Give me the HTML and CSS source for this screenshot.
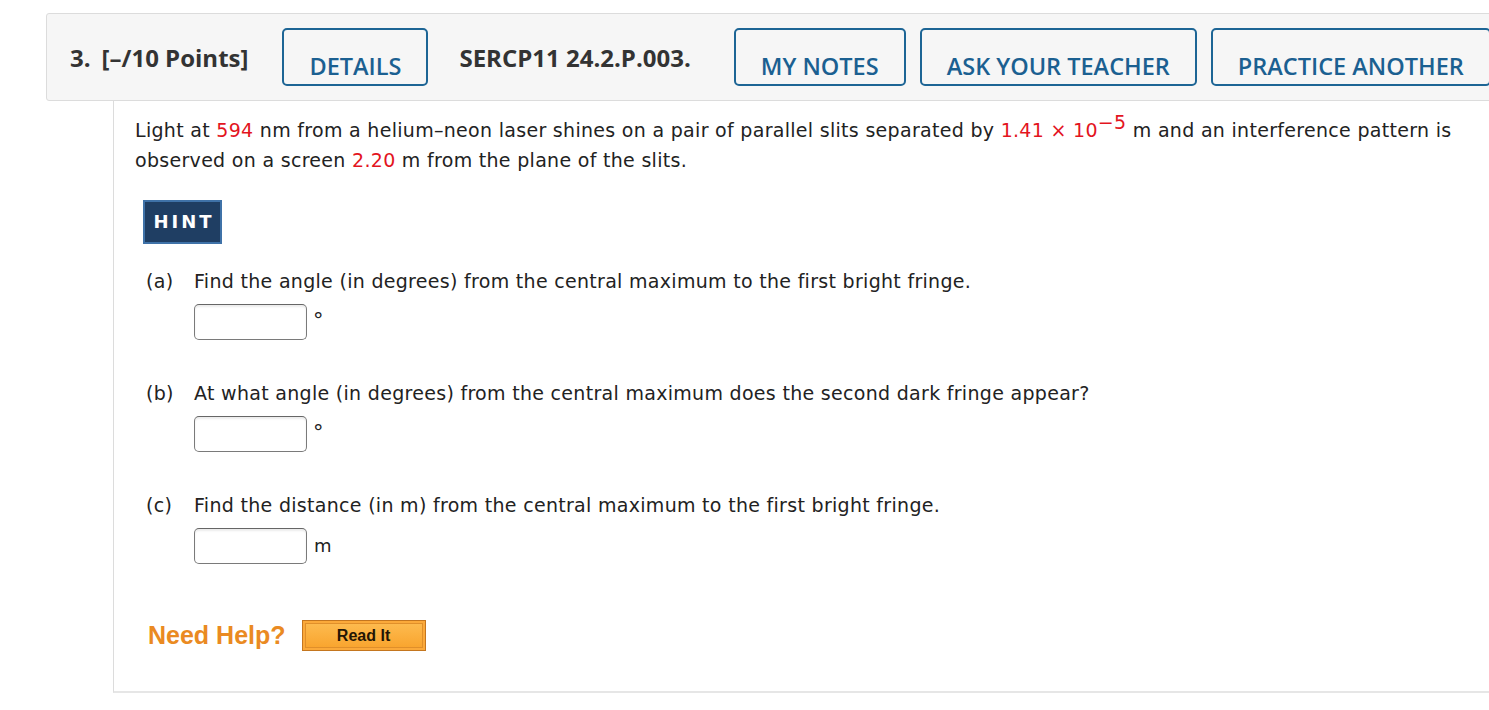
FILE: index.html
```html
<!DOCTYPE html>
<html lang="en">
<head>
<meta charset="utf-8">
<title>SERCP11 24.2.P.003</title>
<link rel="stylesheet" href="styles.css">
</head>
<body>
<div class="question">
  <div class="header">
    <span class="qnum">3.</span>
    <span class="points">[–/10 Points]</span>
    <button class="hbtn btn-details">DETAILS</button>
    <span class="code">SERCP11 24.2.P.003.</span>
    <button class="hbtn btn-notes">MY NOTES</button>
    <button class="hbtn btn-ask">ASK YOUR TEACHER</button>
    <button class="hbtn btn-practice">PRACTICE ANOTHER</button>
  </div>
  <div class="content">
    <p class="prompt">Light at <span class="red">594</span> nm from a helium–neon laser shines on a pair of parallel slits separated by <span class="red">1.41 × 10<sup>−5</sup></span> m and an interference pattern is observed on a screen <span class="red">2.20</span> m from the plane of the slits.</p>
    <div class="hint">HINT</div>

    <div class="part">
      <div class="part-q"><span class="plabel">(a)</span><span>Find the angle (in degrees) from the central maximum to the first bright fringe.</span></div>
      <div class="answer"><span class="box"></span><span class="unit deg">°</span></div>
    </div>

    <div class="part">
      <div class="part-q"><span class="plabel">(b)</span><span>At what angle (in degrees) from the central maximum does the second dark fringe appear?</span></div>
      <div class="answer"><span class="box"></span><span class="unit deg">°</span></div>
    </div>

    <div class="part">
      <div class="part-q"><span class="plabel">(c)</span><span>Find the distance (in m) from the central maximum to the first bright fringe.</span></div>
      <div class="answer"><span class="box"></span><span class="unit">m</span></div>
    </div>

    <div class="help">
      <span class="need">Need Help?</span>
      <span class="readit"><span class="readit-inner">Read It</span></span>
    </div>
  </div>
</div>
</body>
</html>
```

FILE: styles.css
```css
html, body {
  margin: 0;
  padding: 0;
  background: #ffffff;
  overflow: hidden;
}

.question {
  margin: 13px 0 0 46px;
  width: 1520px;
}

.header {
  box-sizing: border-box;
  height: 88px;
  background: #f6f6f6;
  border: 1px solid #dcdcdc;
  border-radius: 3px;
  display: flex;
  align-items: center;
  padding-left: 23px;
  font-family: "Open Sans", "Liberation Sans", sans-serif;
  font-weight: 700;
  color: #333333;
  font-size: 24px;
}

.qnum { margin-right: 11px; }
.points { margin-right: 34px; }
.code { margin: 0 43px 0 31px; }

.hbtn {
  box-sizing: border-box;
  height: 58px;
  margin-top: 0;
  padding: 18px 25px 0;
  background: transparent;
  border: 2.5px solid #1d6595;
  border-radius: 5px;
  font-family: "Open Sans", "Liberation Sans", sans-serif;
  font-weight: 600;
  font-size: 23.5px;
  color: #1b6091;
  white-space: nowrap;
  line-height: 30px;
}

.btn-notes, .btn-ask { margin-right: 14px; }

.content {
  margin-left: 67px;
  border-left: 1px solid #dcdcdc;
  border-bottom: 2px solid #e6e6e6;
  padding: 14px 0 40px 21px;
  font-family: Verdana, "DejaVu Sans", sans-serif;
  font-size: 19px;
  letter-spacing: 0.3px;
  color: #222222;
}

.prompt {
  margin: 0;
  width: 1340px;
  line-height: 30px;
}

.red { color: #e3141e; }

sup {
  font-size: 19px;
  line-height: 0;
  vertical-align: 8px;
}

.hint {
  display: inline-block;
  box-sizing: border-box;
  margin: 25px 0 0 8px;
  width: 79px;
  height: 44px;
  background: #1f3e63;
  border: 2px solid #3f72a8;
  color: #ffffff;
  font-weight: 700;
  font-size: 18px;
  letter-spacing: 3px;
  padding-left: 3px;
  line-height: 40px;
  text-align: center;
}

.part { margin-top: 22px; }
.part + .part { margin-top: 38px; }

.part-q {
  display: flex;
  line-height: 30px;
  padding-left: 11px;
}

.plabel { width: 48px; flex: none; }

.answer {
  display: flex;
  align-items: flex-start;
  margin: 8px 0 0 59px;
}

.box {
  box-sizing: border-box;
  width: 113px;
  height: 36px;
  border: 1.5px solid #7a7a7a;
  border-top-color: #666;
  border-radius: 5px;
  background: #fff;
  box-shadow: inset 0 2px 2px rgba(0,0,0,0.08);
}

.unit {
  margin-left: 7px;
  line-height: 36px;
  font-size: 18px;
}

.unit.deg {
  margin-left: 6px;
  line-height: 34px;
  font-size: 21px;
}

.help {
  display: flex;
  align-items: center;
  margin: 56px 0 0 13px;
}

.need {
  font-family: "Liberation Sans", Arial, sans-serif;
  font-weight: 700;
  font-size: 25px;
  letter-spacing: 0;
  color: #ea8a22;
  margin-right: 16px;
}

.readit {
  box-sizing: border-box;
  width: 124px;
  height: 31px;
  border: 1px solid #c4761f;
  background: #fba93a;
  padding: 2px;
  display: flex;
}

.readit-inner {
  flex: 1;
  border: 1px solid #e08f2a;
  background: linear-gradient(#fdba4e, #f9a52f);
  font-family: "Liberation Sans", Arial, sans-serif;
  font-weight: 700;
  font-size: 16px;
  letter-spacing: 0;
  color: #241605;
  text-align: center;
  line-height: 24px;
}
```
